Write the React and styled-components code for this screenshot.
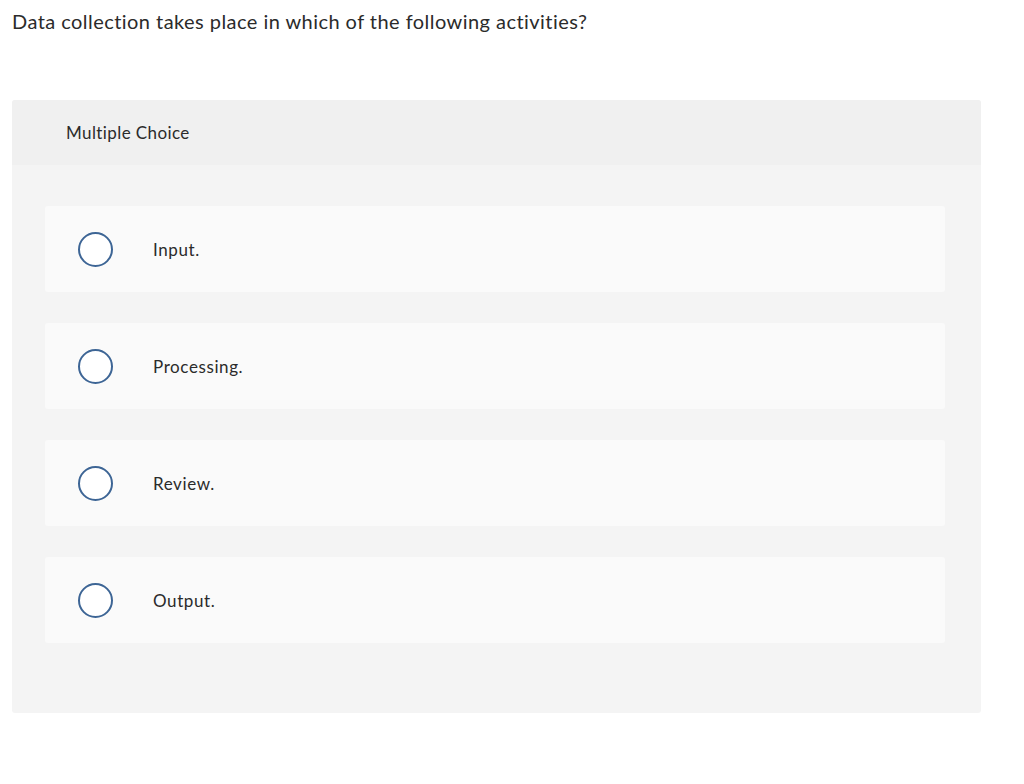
import React from "react";
import styled, { createGlobalStyle } from "styled-components";

const options = ["Input.", "Processing.", "Review.", "Output."];

export default function App() {
  return (
    <>
      <GlobalStyle />
      <Page>
        <Question>Data collection takes place in which of the following activities?</Question>
        <Card>
          <CardHeader>Multiple Choice</CardHeader>
          <OptionList>
            {options.map((label) => (
              <Option key={label}>
                <Radio />
                <OptionLabel>{label}</OptionLabel>
              </Option>
            ))}
          </OptionList>
        </Card>
      </Page>
    </>
  );
}

const GlobalStyle = createGlobalStyle`
  body {
    margin: 0;
    background: #fff;
    font-family: "Lato", "Open Sans", sans-serif;
    color: #2b2b2b;
  }
`;

const Page = styled.div`
  padding: 9px 43px 0 12px;
`;

const Question = styled.h1`
  margin: 0;
  font-size: 20px;
  font-weight: 400;
  letter-spacing: 0.45px;
  line-height: 24px;
  color: #2b2b2b;
`;

const Card = styled.div`
  margin-top: 67px;
  background: #f4f4f4;
  border-radius: 3px;
  overflow: hidden;
`;

const CardHeader = styled.div`
  height: 65px;
  background: #f0f0f0;
  display: flex;
  align-items: center;
  padding-left: 54px;
  font-size: 17px;
  letter-spacing: 0.4px;
  color: #2b2b2b;
`;

const OptionList = styled.div`
  display: flex;
  flex-direction: column;
  gap: 31px;
  padding: 41px 36px 70px 33px;
`;

const Option = styled.div`
  height: 86px;
  background: #fafafa;
  border-radius: 3px;
  display: flex;
  align-items: center;
  padding-left: 33px;
`;

const Radio = styled.span`
  box-sizing: border-box;
  width: 35px;
  height: 35px;
  border: 2px solid #3d6595;
  border-radius: 50%;
  background: #fff;
  flex-shrink: 0;
`;

const OptionLabel = styled.span`
  margin-left: 40px;
  font-size: 17px;
  letter-spacing: 0.6px;
  color: #2b2b2b;
`;
